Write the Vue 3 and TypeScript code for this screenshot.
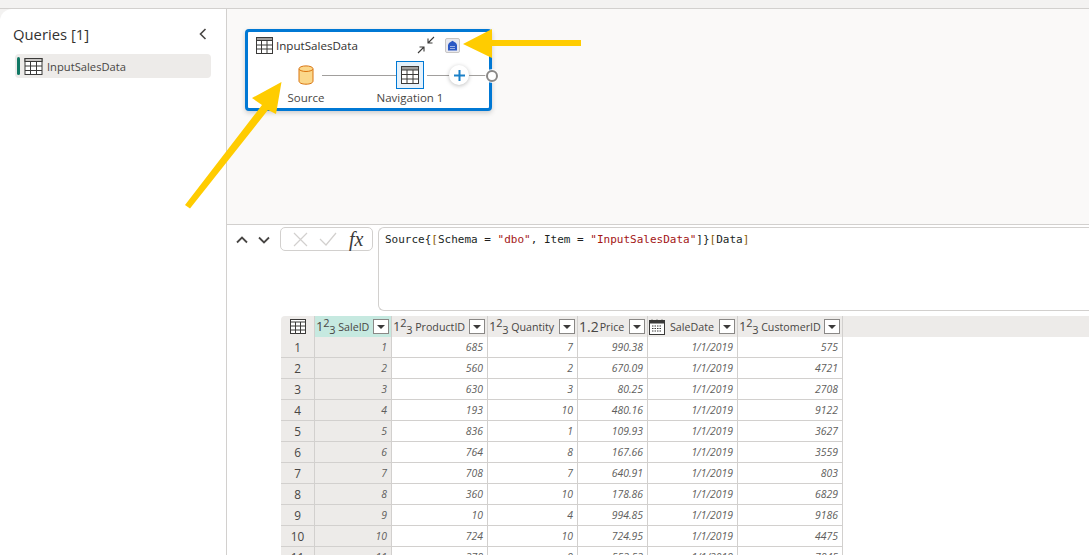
<script setup lang="ts">
interface Col { key: string; label: string; type: 'int' | 'dec' | 'date'; width: number; active?: boolean }
const cols: Col[] = [
  { key: 'id', label: 'SaleID', type: 'int', width: 77, active: true },
  { key: 'pid', label: 'ProductID', type: 'int', width: 96 },
  { key: 'qty', label: 'Quantity', type: 'int', width: 90 },
  { key: 'price', label: 'Price', type: 'dec', width: 70 },
  { key: 'date', label: 'SaleDate', type: 'date', width: 90 },
  { key: 'cust', label: 'CustomerID', type: 'int', width: 105 },
]
const raw: [number, number, string, number][] = [
  [685, 7, '990.38', 575], [560, 2, '670.09', 4721], [630, 3, '80.25', 2708],
  [193, 10, '480.16', 9122], [836, 1, '109.93', 3627], [764, 8, '167.66', 3559],
  [708, 7, '640.91', 803], [360, 10, '178.86', 6829], [10, 4, '994.85', 9186],
  [724, 10, '724.95', 4475], [378, 9, '552.52', 7845],
]
const rows = raw.map((r, i) => [String(i + 1), String(r[0]), String(r[1]), r[2], '1/1/2019', String(r[3])])
</script>

<template>
  <div class="page">
    <div class="topbar"></div>
    <div class="main">
      <aside class="queries">
        <div class="q-head">
          <span class="q-title">Queries [1]</span>
          <svg class="q-collapse" width="12" height="14" viewBox="0 0 12 14"><path d="M8.5 2 L3.5 7 L8.5 12" fill="none" stroke="#484644" stroke-width="1.6"/></svg>
        </div>
        <div class="q-item">
          <span class="q-mark"></span>
          <svg width="19" height="19" viewBox="0 0 19 19"><rect x="1" y="1.5" width="17" height="16" fill="#fff" stroke="#3b3a39"/><rect x="1" y="1.5" width="17" height="3" fill="#c8c6c4" stroke="#3b3a39"/><path d="M1 9h17M1 13.5h17M6.5 4.5v13M12.5 4.5v13" stroke="#3b3a39" fill="none"/></svg>
          <span class="q-name">InputSalesData</span>
        </div>
      </aside>
      <section class="work">
        <div class="diagram">
          <div class="card">
            <div class="card-head">
              <svg width="17" height="17" viewBox="0 0 17 17"><rect x=".5" y=".5" width="16" height="16" fill="#fff" stroke="#3b3a39"/><rect x=".5" y=".5" width="16" height="3" fill="#a19f9d" stroke="#3b3a39"/><path d="M.5 8h16M.5 12h16M5.5 3.5v13M11 3.5v13" stroke="#3b3a39" fill="none"/></svg>
              <span class="card-title">InputSalesData</span>
              <svg class="collapse" width="18" height="18" viewBox="0 0 18 18"><path d="M17 1 L11 7 M11 2.5 V7 H15.5 M1 17 L7 11 M2.5 11 H7 V15.5" fill="none" stroke="#3b3a39" stroke-width="1.1"/></svg>
              <span class="badge"><svg width="11" height="11" viewBox="0 0 11 11"><path d="M5.5 .8 L9 3 L10 5 V10.5 H1 V5 L2 3 Z" fill="#2b58c4"/><path d="M3 6.5h5M3 8.5h5" stroke="#b9c8ee" stroke-width=".8"/></svg></span>
            </div>
            <div class="steps">
              <div class="step source">
                <svg width="16" height="20" viewBox="0 0 16 20"><path d="M1 4 V16 C1 18 4 19.200 8 19.200 C12 19.200 15 18 15 16 V4" fill="#fbd88b" stroke="#d9740f" stroke-width="1"/><ellipse cx="8" cy="3.700" rx="7" ry="2.800" fill="#fbd88b" stroke="#d9740f"/></svg>
                <span class="step-label">Source</span>
              </div>
              <span class="line line-a"></span>
              <div class="step nav">
                <span class="nav-box"><svg width="18" height="18" viewBox="0 0 18 18"><rect x=".5" y=".5" width="17" height="17" fill="#fff" stroke="#3b3a39"/><rect x=".5" y=".5" width="17" height="3.500" fill="#a19f9d" stroke="#3b3a39"/><path d="M.5 8.500h17M.5 13h17M6 4v14M12 4v14" stroke="#3b3a39" fill="none"/></svg></span>
                <span class="step-label">Navigation 1</span>
              </div>
              <span class="line line-b"></span>
              <span class="plus"><svg width="11" height="11" viewBox="0 0 11 11"><path d="M5.500 0v11M0 5.500h11" stroke="#1a80c8" stroke-width="2"/></svg></span>
              <span class="line line-c"></span>
              <span class="end"></span>
            </div>
          </div>
        </div>
        <div class="formula-row">
          <div class="nav-arrows">
            <svg width="14" height="10" viewBox="0 0 14 10"><path d="M2 7.500 L7 2.500 L12 7.500" fill="none" stroke="#484644" stroke-width="1.800"/></svg>
            <svg width="14" height="10" viewBox="0 0 14 10"><path d="M2 2.500 L7 7.500 L12 2.500" fill="none" stroke="#484644" stroke-width="1.800"/></svg>
          </div>
          <div class="fx-tools">
            <svg width="15" height="15" viewBox="0 0 15 15"><path d="M1 1 L14 14 M14 1 L1 14" stroke="#d2d0ce" stroke-width="1.200" fill="none"/></svg>
            <svg width="18" height="14" viewBox="0 0 18 14"><path d="M1 7 L7 13 L17 1" stroke="#d2d0ce" stroke-width="1.200" fill="none"/></svg>
            <span class="fx">fx</span>
          </div>
          <div class="formula"><span>Source{</span><span class="br">[</span><span>Schema = </span><span class="str">"dbo"</span><span>, Item = </span><span class="str">"InputSalesData"</span><span>]}</span><span class="br">[</span><span>Data</span><span class="br">]</span></div>
        </div>
        <div class="grid-wrap">
          <div class="grid-head">
            <div class="corner"><svg width="16" height="15" viewBox="0 0 16 15"><rect x=".5" y=".5" width="15" height="14" fill="#fff" stroke="#3b3a39"/><path d="M.5 3h15M.5 7h15M.5 11h15M5.500 3v12M10.500 3v12" stroke="#3b3a39" fill="none"/></svg></div>
            <div v-for="c in cols" :key="c.key" class="hcell" :class="{ active: c.active }" :style="{ width: c.width + 'px' }">
              <span v-if="c.type === 'int'" class="ty">1<sup>2</sup><sub>3</sub></span>
              <span v-else-if="c.type === 'dec'" class="ty dec">1.2</span>
              <svg v-else class="cal" width="16" height="16" viewBox="0 0 16 16"><rect x=".5" y="1.500" width="15" height="14" fill="#fff" stroke="#3b3a39"/><rect x=".5" y="1.500" width="15" height="3" fill="#3b3a39"/><path d="M3 .5v2M8 .5v2M13 .5v2" stroke="#3b3a39"/><path d="M3 7h10M3 9.500h10M3 12h10" stroke="#3b3a39" stroke-dasharray="1.500 1"/></svg>
              <span class="hlabel">{{ c.label }}</span>
              <span class="drop"><svg width="8" height="4" viewBox="0 0 8 4"><path d="M0 0h8L4 4z" fill="#3b3a39"/></svg></span>
            </div>
          </div>
          <div v-for="r in rows" :key="r[0]" class="grow">
            <div class="idx">{{ r[0] }}</div>
            <div v-for="(c, j) in cols" :key="c.key" class="cell" :class="{ first: j === 0 }" :style="{ width: c.width + 'px' }">{{ r[j] }}</div>
          </div>
        </div>
      </section>
    </div>
    <svg class="arrows" width="1089" height="555" viewBox="0 0 1089 555">
      <path d="M581 40 H492 V29 L463 44 L492 58 V46 H581 Z" fill="#ffcc00"/>
      <path d="M185 205 L262 105 L252 98 L281.500 82 L276 114 L268 110 L190 208.500 Z" fill="#ffcc00"/>
    </svg>
  </div>
</template>

<style>
html, body { margin: 0; background: #fff; }
</style>

<style scoped>
.page { position: relative; width: 1089px; height: 555px; overflow: hidden; font-family: "Open Sans", sans-serif; color: #323130; background: #f3f2f1; display: flex; flex-direction: column; }
.topbar { height: 8px; border-bottom: 1px solid #d2d0ce; flex: none; }
.main { flex: 1; display: flex; min-height: 0; }
.queries { flex: none; background: #fff; border-right: 1px solid #d2d0ce; border-top-left-radius: 12px; padding: 16px 15px 0 15px; width: 196px; }
.q-head { display: flex; align-items: center; justify-content: space-between; height: 17px; margin-left: -2px; }
.q-title { font-size: 14.800px; color: #323130; }
.q-collapse { margin-right: 2px; }
.q-item { margin-top: 12px; height: 24px; background: #edebe9; border-radius: 4px; display: flex; align-items: center; }
.q-mark { width: 3px; height: 18px; background: #117865; border-radius: 2px; margin: 0 4px 0 2px; }
.q-name { font-size: 11.200px; margin-left: 4px; color: #484644; }
.work { flex: 1; min-width: 0; display: flex; flex-direction: column; background: #fff; }
.diagram { height: 216px; flex: none; background: #faf9f8; border-bottom: 1px solid #d2d0ce; padding: 20px 0 0 18px; box-sizing: border-box; }
.card { width: 247px; height: 82px; box-sizing: border-box; background: #fff; border: 3px solid #0078d4; border-radius: 4px; box-shadow: 0 2px 5px rgba(0,0,0,.18); }
.card-head { display: flex; align-items: center; height: 26px; padding-left: 8px; }
.card-title { font-size: 11.600px; margin-left: 3px; color: #323130; }
.collapse { margin-left: 59px; }
.badge { width: 13px; height: 13px; margin-left: 10px; background: #e8e8ee; border: 1px solid #c8c6c4; border-radius: 2px; display: flex; align-items: center; justify-content: center; }
.steps { position: relative; height: 50px; }
.step { position: absolute; top: 0; display: flex; flex-direction: column; align-items: center; }
.source { left: 32px; width: 52px; top: 7px; }
.nav { left: 112px; width: 100px; top: 3px; }
.step-label { font-size: 11.500px; color: #484644; line-height: 16px; margin-top: 5px; }
.nav-box { width: 28px; height: 28px; box-sizing: border-box; border: 1px solid #0078d4; background: #e5f1fb; display: flex; align-items: center; justify-content: center; }
.nav .step-label { margin-top: 1px; }
.line { position: absolute; height: 1px; background: #a19f9d; top: 17px; }
.line-a { left: 74px; width: 74px; }
.line-b { left: 179px; width: 24px; }
.line-c { left: 221px; width: 17px; }
.plus { position: absolute; left: 201px; top: 7px; width: 20px; height: 20px; border-radius: 50%; background: #fff; box-shadow: 0 1px 4px rgba(0,0,0,.25); display: flex; align-items: center; justify-content: center; }
.end { position: absolute; left: 238px; top: 12px; width: 12px; height: 12px; box-sizing: border-box; border: 2.500px solid #8a8886; border-radius: 50%; background: #fff; box-shadow: 0 0 0 1px rgba(255,255,255,.8); }
.formula-row { display: flex; align-items: flex-start; padding: 2px 0 0 8px; height: 91px; flex: none; box-sizing: border-box; }
.nav-arrows { display: flex; gap: 8px; padding-top: 8px; width: 45px; flex: none; }
.fx-tools { width: 93px; height: 24px; box-sizing: border-box; border: 1px solid #d2d0ce; border-radius: 5px; display: flex; align-items: center; padding-left: 12px; gap: 11px; flex: none; }
.fx { font-family: "Liberation Serif", serif; font-style: italic; font-size: 20px; color: #3b3a39; margin-left: 1px; }
.formula { margin-left: 5px; flex: 1; height: 84px; box-sizing: border-box; border: 1px solid #d2d0ce; border-right: none; border-radius: 6px 0 0 6px; padding: 4px 0 0 6px; font-family: "DejaVu Sans Mono", monospace; font-size: 11px; line-height: 15px; color: #201f1e; white-space: pre; }
.br { color: #8a5a00; }
.str { color: #a31515; }
.grid-wrap { margin-left: 54px; font-size: 10.700px; }
.grid-head { display: flex; height: 21px; background: #edebe9; border-top-left-radius: 4px; }
.corner { width: 34px; flex: none; display: flex; align-items: center; justify-content: center; box-sizing: border-box; border-right: 1px solid #d2d0ce; }
.hcell { flex: none; box-sizing: border-box; display: flex; align-items: center; padding: 0 2px 0 1px; border-right: 1px solid #d2d0ce; color: #484644; white-space: nowrap; }
.hcell.active { background: #c6e9e0; }
.ty { font-size: 13px; color: #484644; line-height: 1; margin-right: 3px; letter-spacing: -.3px; }
.ty sup { font-size: 11px; vertical-align: 4px; line-height: 0; }
.ty sub { font-size: 11px; vertical-align: -3px; line-height: 0; }
.ty.dec { font-size: 14px; letter-spacing: 0; margin-right: 1px; }
.cal { margin-right: 5px; }
.hlabel { flex: 1; min-width: 0; }
.drop { width: 16px; height: 15px; box-sizing: border-box; flex: none; background: #fff; border: 1px solid #8a8886; display: flex; align-items: center; justify-content: center; }
.grow { display: flex; height: 21px; }
.idx { width: 34px; flex: none; box-sizing: border-box; background: #edebe9; border-right: 1px solid #d2d0ce; border-bottom: 1px solid #d2d0ce; text-align: center; line-height: 21px; font-size: 11.800px; color: #484644; }
.cell { flex: none; box-sizing: border-box; border-right: 1px solid #d2d0ce; border-bottom: 1px solid #d2d0ce; text-align: right; padding-right: 4px; line-height: 21px; font-style: italic; color: #605e5c; font-size: 10.400px; background: #fff; }
.cell.first { background: #edebe9; }
.arrows { position: absolute; left: 0; top: 0; pointer-events: none; }
</style>
